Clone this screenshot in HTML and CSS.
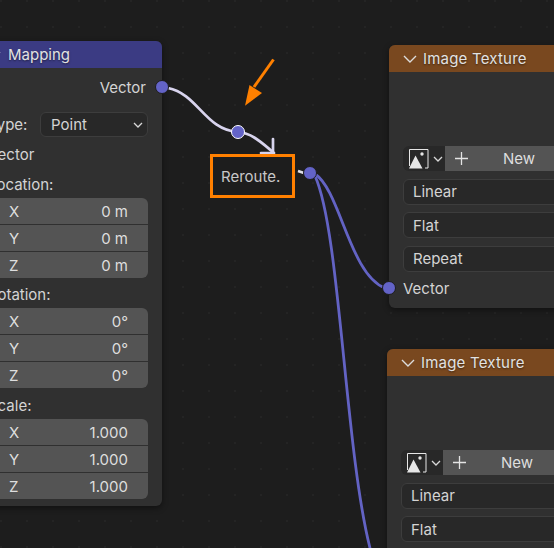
FILE: index.html
```html
<!DOCTYPE html>
<html lang="en">
<head>
<meta charset="utf-8">
<title>Shader nodes</title>
<link rel="stylesheet" href="styles.css">
</head>
<body>
<main class="canvas">
  <svg class="wires" width="554" height="548" viewBox="0 0 554 548">
    <path class="wire-light" d="M168 88C198 94 205 130 238 132C252 133 262 143 274 153"/>
    <path class="wire-light" d="M273 139V153H261"/>
    <path class="wire-light wire-stub" d="M298 171L304 173"/>
    <path class="wire-blue" d="M315 174C340 190 350 275 385 288"/>
    <path class="wire-blue" d="M315 176C340 230 345 450 370 548"/>
    <path class="arrow-line" d="M273.500 59.500L254 87"/>
    <path class="arrow-head" d="M245 105.700L249.500 85L262 93Z"/>
  </svg>

  <section class="node node-mapping">
    <header class="node-head head-blue"><svg class="head-chev" width="14" height="8" viewBox="0 0 14 8"><path d="M1 1l6 6 6-6"/></svg><span>Mapping</span></header>
    <div class="node-body">
      <div class="out-row">Vector</div>
      <div class="type-row"><span>Type:</span><div class="select select-type"><span>Point</span><svg class="small-chev" width="10" height="6" viewBox="0 0 10 6"><path d="M1 1l4 4 4-4"/></svg></div></div>
      <div class="label-row">Vector</div>
      <div class="label-row label-gap">Location:</div>
      <div class="fields">
        <div class="field"><span>X</span><span>0 m</span></div>
        <div class="field"><span>Y</span><span>0 m</span></div>
        <div class="field"><span>Z</span><span>0 m</span></div>
      </div>
      <div class="label-row label-rot">Rotation:</div>
      <div class="fields">
        <div class="field"><span>X</span><span>0°</span></div>
        <div class="field"><span>Y</span><span>0°</span></div>
        <div class="field"><span>Z</span><span>0°</span></div>
      </div>
      <div class="label-row">Scale:</div>
      <div class="fields">
        <div class="field"><span>X</span><span>1.000</span></div>
        <div class="field"><span>Y</span><span>1.000</span></div>
        <div class="field"><span>Z</span><span>1.000</span></div>
      </div>
    </div>
  </section>

  <section class="node node-tex-a">
    <header class="node-head head-brown"><svg class="head-chev" width="14" height="8" viewBox="0 0 14 8"><path d="M1 1l6 6 6-6"/></svg><span>Image Texture</span></header>
    <div class="node-body tex-body">
      <div class="image-row">
        <div class="image-picker">
          <svg class="image-icon" width="20" height="20" viewBox="0 0 20 20"><path class="icon-frame" d="M.5 17V.5h18.500v18.500h-3"/><path class="icon-fill" d="M0 19.500L6.500 6.500l7 13Z"/><circle class="icon-fill" cx="13" cy="5" r="1.700"/></svg>
          <svg class="small-chev" width="10" height="6" viewBox="0 0 10 6"><path d="M1 1l4 4 4-4"/></svg>
        </div>
        <div class="new-btn"><svg class="plus" width="13" height="13" viewBox="0 0 13 13"><path d="M6.500 0v13M0 6.500h13"/></svg><span>New</span></div>
      </div>
      <div class="select tex-select">Linear</div>
      <div class="select tex-select">Flat</div>
      <div class="select tex-select">Repeat</div>
      <div class="in-row">Vector</div>
    </div>
  </section>

  <section class="node node-tex-b">
    <header class="node-head head-brown"><svg class="head-chev" width="14" height="8" viewBox="0 0 14 8"><path d="M1 1l6 6 6-6"/></svg><span>Image Texture</span></header>
    <div class="node-body tex-body">
      <div class="image-row">
        <div class="image-picker">
          <svg class="image-icon" width="20" height="20" viewBox="0 0 20 20"><path class="icon-frame" d="M.5 17V.5h18.500v18.500h-3"/><path class="icon-fill" d="M0 19.500L6.500 6.500l7 13Z"/><circle class="icon-fill" cx="13" cy="5" r="1.700"/></svg>
          <svg class="small-chev" width="10" height="6" viewBox="0 0 10 6"><path d="M1 1l4 4 4-4"/></svg>
        </div>
        <div class="new-btn"><svg class="plus" width="13" height="13" viewBox="0 0 13 13"><path d="M6.500 0v13M0 6.500h13"/></svg><span>New</span></div>
      </div>
      <div class="select tex-select">Linear</div>
      <div class="select tex-select">Flat</div>
    </div>
  </section>

  <span class="socket socket-out"></span>
  <span class="socket socket-reroute-a"></span>
  <span class="socket socket-reroute-b"></span>
  <span class="socket socket-in"></span>
  <div class="callout">Reroute.</div>
</main>
</body>
</html>
```
FILE: styles.css
```css
* { box-sizing: border-box; }
html, body { margin: 0; height: 100%; }
body { background: #1d1d1d; overflow: hidden; }
.canvas {
  position: relative;
  width: 554px;
  height: 548px;
  overflow: hidden;
  font: 15px/1 Inter, "Liberation Sans", sans-serif;
  color: #d4d4d4;
  background-color: #1d1d1d;
  background-image: radial-gradient(circle at 1px 1px, #242424 1px, transparent 1.5px);
  background-size: 26px 26px;
}
.wires { position: absolute; left: 0; top: 0; }
.wires path { fill: none; stroke-linecap: round; }
.wire-light { stroke: #d8d4ee; stroke-width: 2.7; }
.wires .wire-stub { stroke-linecap: butt; stroke: #e0e0e8; }
.wire-blue { stroke: #6363c4; stroke-width: 2.8; }
.wires .arrow-line { stroke: #ff8000; stroke-width: 3; stroke-linecap: butt; }
.wires .arrow-head { fill: #ff8000; }

.node {
  position: absolute;
  background: #303030;
  border-radius: 6px;
  box-shadow: 0 2px 6px rgba(0, 0, 0, .45);
  overflow: hidden;
}
.node-mapping { left: -34px; top: 41px; width: 196px; height: 465px; }
.node-tex-a { left: 389px; top: 45px; width: 220px; height: 263px; }
.node-tex-b { left: 387px; top: 349px; width: 220px; height: 263px; }
.node-head {
  height: 27px;
  display: flex;
  align-items: center;
  color: #e2e2e2;
  text-shadow: 0 1px 2px rgba(0, 0, 0, .5);
}
.head-blue { background: #3b3b83; padding-left: 21px; gap: 7px; }
.head-brown { background: #79481f; padding-left: 14px; gap: 6px; letter-spacing: .2px; }
.head-chev { fill: none; stroke: #dcdcdc; stroke-width: 1.4; }

.node-body { padding: 0 14px 0 22px; }
.out-row { height: 15px; margin-top: 12px; text-align: right; padding-right: 2px; }
.type-row {
  display: flex;
  align-items: center;
  justify-content: space-between;
  margin-top: 17px;
}
.select {
  display: flex;
  align-items: center;
  background: #282828;
  border: 1px solid #3d3d3d;
  border-radius: 6px;
  color: #d4d4d4;
}
.select-type {
  width: 108px;
  height: 25px;
  justify-content: space-between;
  padding: 0 4px 0 10px;
}
.small-chev { fill: none; stroke: #d8d8d8; stroke-width: 1.3; }
.label-row { height: 15px; margin-top: 10px; }
.label-row.label-gap { margin-top: 15px; }
.label-row.label-rot { margin-top: 9px; }
.fields {
  margin-top: 6px;
  margin-left: -22px;
  border-radius: 6px;
  overflow: hidden;
  display: flex;
  flex-direction: column;
  gap: 1px;
  background: #303030;
}
.field {
  height: 26px;
  display: flex;
  justify-content: space-between;
  align-items: center;
  padding: 0 20px 0 43px;
  background: #545454;
  color: #dedede;
}

.tex-body { padding: 74px 0 0 14px; }
.image-row { display: flex; height: 25px; border-radius: 6px 0 0 6px; overflow: hidden; }
.image-picker {
  width: 42px;
  display: flex;
  align-items: center;
  gap: 4px;
  padding-left: 6px;
  background: #282828;
}
.image-icon { flex: none; }
.icon-frame { fill: none; stroke: #e6e6e6; stroke-width: 1; }
.icon-fill { fill: #e6e6e6; }
.new-btn {
  flex: 1;
  display: flex;
  align-items: center;
  background: #545454;
  color: #dedede;
  padding-left: 10px;
}
.plus { fill: none; stroke: #e4e4e4; stroke-width: 1.3; margin-right: 35px; }
.tex-select { height: 26px; margin-top: 7.5px; padding-left: 9px; }
.in-row { margin-top: 9px; }

.socket {
  position: absolute;
  width: 14px;
  height: 14px;
  border-radius: 50%;
  background: #6363c7;
  border: 1px solid #1d1d1d;
}
.socket-out { left: 155px; top: 80px; }
.socket-reroute-a { left: 231px; top: 125px; border: 1.5px solid #fff; }
.socket-reroute-b { left: 303px; top: 166px; }
.socket-in { left: 382px; top: 281px; }

.callout {
  position: absolute;
  left: 210px;
  top: 154px;
  width: 85px;
  height: 44px;
  padding-left: 8px;
  display: flex;
  align-items: center;
  background: #1d1d1d;
  border: 3px solid #ff8000;
  color: #c8c8c8;
}
```
